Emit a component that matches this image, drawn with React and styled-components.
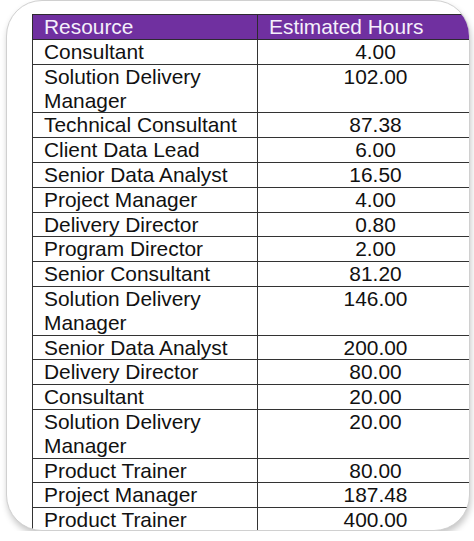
import React from "react";
import styled, { createGlobalStyle } from "styled-components";

const rows = [
  ["Consultant", "4.00"],
  ["Solution Delivery Manager", "102.00"],
  ["Technical Consultant", "87.38"],
  ["Client Data Lead", "6.00"],
  ["Senior Data Analyst", "16.50"],
  ["Project Manager", "4.00"],
  ["Delivery Director", "0.80"],
  ["Program Director", "2.00"],
  ["Senior Consultant", "81.20"],
  ["Solution Delivery Manager", "146.00"],
  ["Senior Data Analyst", "200.00"],
  ["Delivery Director", "80.00"],
  ["Consultant", "20.00"],
  ["Solution Delivery Manager", "20.00"],
  ["Product Trainer", "80.00"],
  ["Project Manager", "187.48"],
  ["Product Trainer", "400.00"],
];

const GlobalStyle = createGlobalStyle`
  body {
    margin: 0;
    background: #fff;
    font-family: "Liberation Sans", Arial, sans-serif;
  }
`;

const Card = styled.div`
  box-sizing: border-box;
  margin-left: 6px;
  width: 464px;
  height: 531px;
  padding: 13px 0 0 25px;
  border: 1px solid #d0d0d0;
  border-radius: 36px;
  overflow: hidden;
  background: #fff;
  box-shadow: 1px 4px 6px rgba(0, 0, 0, 0.22);
`;

const Table = styled.table`
  border-collapse: collapse;
  table-layout: fixed;
  width: 461px;
  font-size: 20.9px;
  line-height: 23.8px;
  color: #111;
`;

const Th = styled.th`
  padding: 0 0 0 11px;
  height: 24px;
  background: #7030a0;
  color: #f5effb;
  font-weight: normal;
  text-align: left;
  border: 1px solid #2e2a30;
`;

const Td = styled.td`
  padding: ${(p) => (p.$num ? "0" : "0 0 0 11px")};
  text-align: ${(p) => (p.$num ? "center" : "left")};
  vertical-align: top;
  border: 1px solid #333;
`;

function App() {
  return (
    <>
      <GlobalStyle />
      <Card>
        <Table>
          <colgroup>
            <col style={{ width: 225 }} />
            <col style={{ width: 236 }} />
          </colgroup>
          <thead>
            <tr>
              <Th>Resource</Th>
              <Th>Estimated Hours</Th>
            </tr>
          </thead>
          <tbody>
            {rows.map(([name, hours], i) => (
              <tr key={i}>
                <Td>{name}</Td>
                <Td $num>{hours}</Td>
              </tr>
            ))}
          </tbody>
        </Table>
      </Card>
    </>
  );
}

export default App;
